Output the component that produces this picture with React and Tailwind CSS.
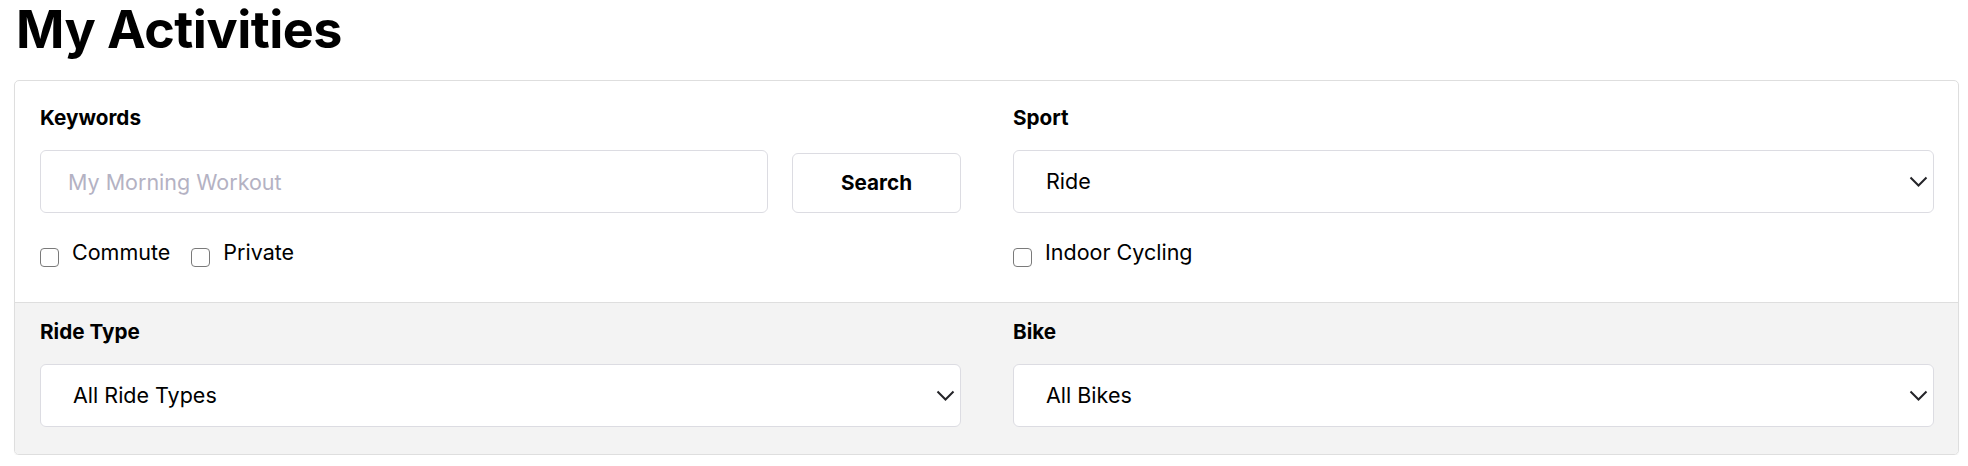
import { useState } from 'react'

function Chevron() {
  return (
    <svg className="pointer-events-none absolute right-[6px] top-1/2 -translate-y-1/2" width="19" height="12" viewBox="0 0 19 12" fill="none">
      <path d="M1.5 1.5 L9.5 9.5 L17.5 1.5" stroke="#242428" strokeWidth="2" />
    </svg>
  )
}

function Select({ value, options, onChange }) {
  return (
    <div className="relative">
      <select
        value={value}
        onChange={e => onChange(e.target.value)}
        className="appearance-none w-full h-[63px] rounded-[6px] border border-[#dcdce2] bg-white pl-[32px] pr-10 text-[21.5px] text-[#000] focus:outline-none"
      >
        {options.map(o => <option key={o}>{o}</option>)}
      </select>
      <Chevron />
    </div>
  )
}

function Check({ label, checked, onChange }) {
  return (
    <label className="flex items-start h-[30px] cursor-pointer">
      <input
        type="checkbox"
        checked={checked}
        onChange={e => onChange(e.target.checked)}
        className="appearance-none mt-[10px] w-[19px] h-[19px] rounded-[4px] border-[1.5px] border-[#7a7a7a] bg-white checked:bg-[#fc4c02] checked:border-[#fc4c02]"
      />
      <span className="ml-[13px] text-[21.5px] leading-[28px] text-black">{label}</span>
    </label>
  )
}

export default function App() {
  const [keywords, setKeywords] = useState('')
  const [commute, setCommute] = useState(false)
  const [priv, setPriv] = useState(false)
  const [indoor, setIndoor] = useState(false)
  const [sport, setSport] = useState('Ride')
  const [rideType, setRideType] = useState('All Ride Types')
  const [bike, setBike] = useState('All Bikes')

  return (
    <div className="font-['Inter',sans-serif] bg-white pl-[14px] pr-[9px] text-black">
      <h1 className="text-[52px] font-bold leading-[60px] tracking-[-0.5px] pl-[2px]">My Activities</h1>

      <div className="mt-[20px] rounded-[5px] border border-[#dedede] shadow-[0_1px_1px_rgba(0,0,0,0.06)] overflow-hidden">
        {/* Top filters */}
        <div className="grid grid-cols-2 gap-[52px] pl-[25px] pr-[24px] pt-[23px] pb-[34px]">
          <div>
            <div className="text-[20.7px] font-bold leading-[28px]">Keywords</div>
            <div className="mt-[18px] flex items-end gap-[24px]">
              <input
                value={keywords}
                onChange={e => setKeywords(e.target.value)}
                placeholder="My Morning Workout"
                className="flex-1 h-[63px] rounded-[6px] border border-[#dcdce2] pl-[27px] text-[21.5px] placeholder:text-[#b4b2c3] focus:outline-none"
              />
              <button className="w-[169px] h-[60px] rounded-[6px] border border-[#dcdce2] bg-white text-[20.7px] font-bold">
                Search
              </button>
            </div>
            <div className="mt-[25px] flex gap-[21px]">
              <Check label="Commute" checked={commute} onChange={setCommute} />
              <Check label="Private" checked={priv} onChange={setPriv} />
            </div>
          </div>

          <div>
            <div className="text-[20.7px] font-bold leading-[28px]">Sport</div>
            <div className="mt-[18px]">
              <Select value={sport} options={['Ride', 'Run', 'Swim', 'Walk', 'Hike']} onChange={setSport} />
            </div>
            <div className="mt-[25px] flex">
              <Check label="Indoor Cycling" checked={indoor} onChange={setIndoor} />
            </div>
          </div>
        </div>

        {/* Secondary filters */}
        <div className="grid grid-cols-2 gap-[52px] border-t border-[#dedede] bg-[#f3f3f3] pl-[25px] pr-[24px] pt-[15px] pb-[27px]">
          <div>
            <div className="text-[20.7px] font-bold leading-[28px]">Ride Type</div>
            <div className="mt-[18px]">
              <Select value={rideType} options={['All Ride Types', 'Race', 'Long Ride', 'Workout']} onChange={setRideType} />
            </div>
          </div>
          <div>
            <div className="text-[20.7px] font-bold leading-[28px]">Bike</div>
            <div className="mt-[18px]">
              <Select value={bike} options={['All Bikes']} onChange={setBike} />
            </div>
          </div>
        </div>
      </div>
    </div>
  )
}
